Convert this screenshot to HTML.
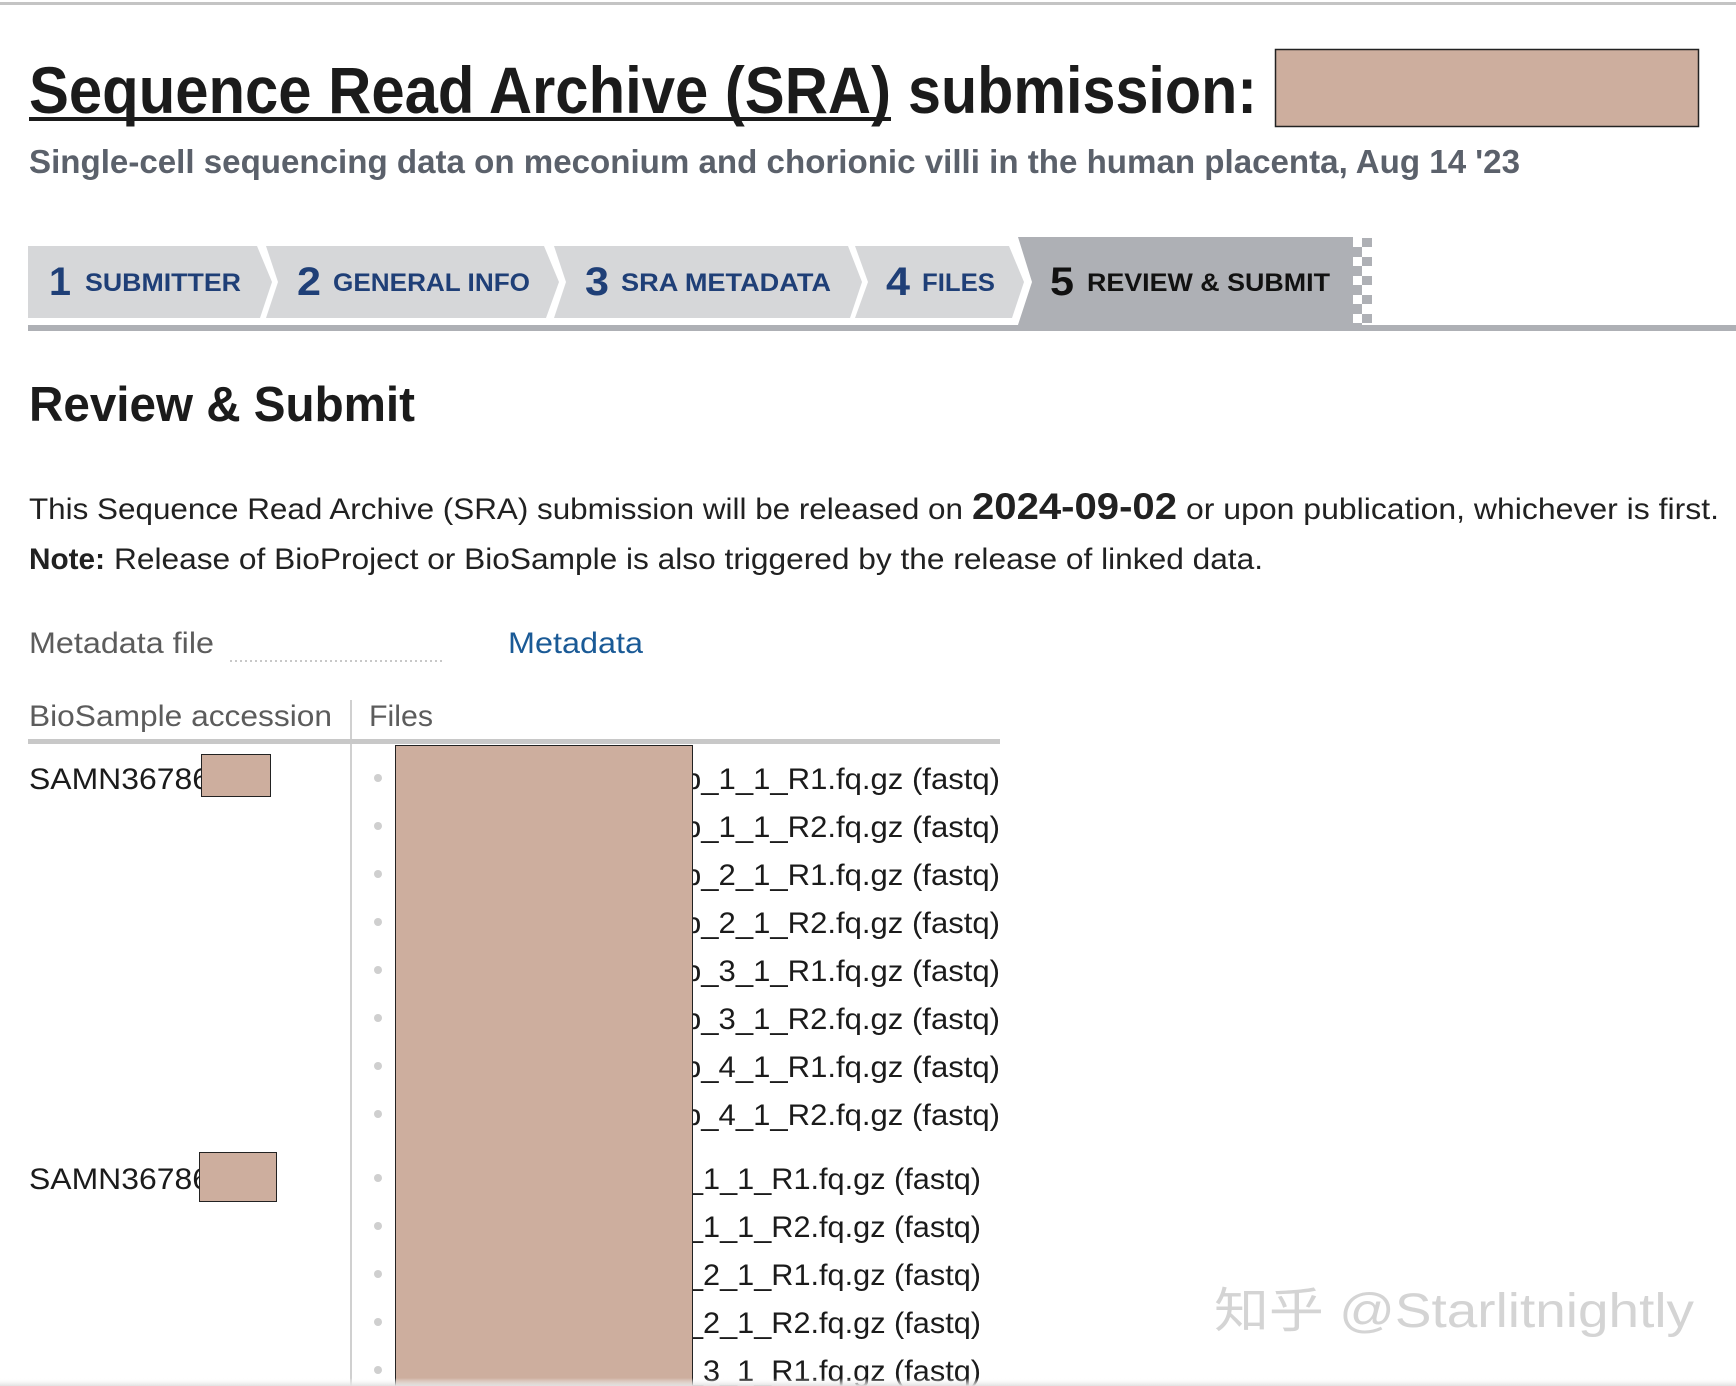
<!DOCTYPE html>
<html><head><meta charset="utf-8"><style>
html,body{margin:0;padding:0;background:#fff;}
svg{display:block;}
text{font-family:"Liberation Sans","Noto Sans CJK SC",sans-serif;}
</style></head><body>
<svg width="1736" height="1386" viewBox="0 0 1736 1386" xmlns="http://www.w3.org/2000/svg">
<defs>
<linearGradient id="sh" x1="0" y1="0" x2="0" y2="1"><stop offset="0" stop-color="#fff" stop-opacity="0"/><stop offset="1" stop-color="#e0e0e0"/></linearGradient>
</defs>
<rect x="0" y="0" width="1736" height="1386" fill="#fff"/>
<rect x="0" y="2" width="1736" height="3" fill="#c4c4c4"/>

<text x="29" y="113" font-size="66" font-weight="bold" fill="#1b1b1b" textLength="862" lengthAdjust="spacingAndGlyphs">Sequence Read Archive (SRA)</text>
<rect x="29" y="117" width="862" height="4" fill="#1b1b1b"/>
<text x="908" y="113" font-size="66" font-weight="bold" fill="#1b1b1b" textLength="349" lengthAdjust="spacingAndGlyphs">submission:</text>
<rect x="1275.5" y="49.5" width="423" height="77" fill="#cdae9e" stroke="#222" stroke-width="1.5"/>
<text x="29" y="173" font-size="33" font-weight="bold" fill="#5b616b" textLength="1491" lengthAdjust="spacingAndGlyphs">Single-cell sequencing data on meconium and chorionic villi in the human placenta, Aug 14 '23</text>

<polygon points="28,246 257,246 272,282 260,318 28,318" fill="#d6d7d9"/>
<polygon points="266,246 544,246 559,282 546,318 266,318 278,282" fill="#d6d7d9"/>
<polygon points="554,246 848,246 862,282 850,318 554,318 566,282" fill="#d6d7d9"/>
<polygon points="855,246 1009,246 1024,282 1012,318 855,318 868,282" fill="#d6d7d9"/>
<polygon points="1018,237 1353,237 1353,331 1016,331 1032,282" fill="#aeb0b5"/>
<g fill="#aeb0b5">
<rect x="1362" y="238" width="10" height="9"/><rect x="1353" y="247" width="9" height="10"/>
<rect x="1362" y="257" width="10" height="9"/><rect x="1353" y="266" width="9" height="10"/>
<rect x="1362" y="276" width="10" height="9"/><rect x="1353" y="285" width="9" height="10"/>
<rect x="1362" y="295" width="10" height="9"/><rect x="1353" y="304" width="9" height="10"/>
<rect x="1362" y="314" width="10" height="9"/><rect x="1353" y="323" width="9" height="8"/>
</g>
<rect x="28" y="325" width="1708" height="6" fill="#aeb0b5"/>
<g font-weight="bold" fill="#1f3f77">
<text x="49" y="295" font-size="40" textLength="22" lengthAdjust="spacingAndGlyphs">1</text>
<text x="85" y="291" font-size="25" textLength="156" lengthAdjust="spacingAndGlyphs">SUBMITTER</text>
<text x="297" y="295" font-size="40" textLength="24" lengthAdjust="spacingAndGlyphs">2</text>
<text x="333" y="291" font-size="25" textLength="197" lengthAdjust="spacingAndGlyphs">GENERAL INFO</text>
<text x="585" y="295" font-size="40" textLength="24" lengthAdjust="spacingAndGlyphs">3</text>
<text x="621" y="291" font-size="25" textLength="210" lengthAdjust="spacingAndGlyphs">SRA METADATA</text>
<text x="886" y="295" font-size="40" textLength="24" lengthAdjust="spacingAndGlyphs">4</text>
<text x="922" y="291" font-size="25" textLength="73" lengthAdjust="spacingAndGlyphs">FILES</text>
</g>
<g font-weight="bold" fill="#111">
<text x="1050" y="295" font-size="40" textLength="24" lengthAdjust="spacingAndGlyphs">5</text>
<text x="1087" y="291" font-size="25" textLength="243" lengthAdjust="spacingAndGlyphs">REVIEW &amp; SUBMIT</text>
</g>

<text x="29" y="421" font-size="49" font-weight="bold" fill="#1b1b1b" textLength="386" lengthAdjust="spacingAndGlyphs">Review &amp; Submit</text>
<text x="29" y="519" font-size="30" fill="#212121" textLength="934" lengthAdjust="spacingAndGlyphs">This Sequence Read Archive (SRA) submission will be released on</text>
<text x="972" y="519" font-size="37" font-weight="bold" fill="#212121" textLength="205" lengthAdjust="spacingAndGlyphs">2024-09-02</text>
<text x="1186" y="519" font-size="30" fill="#212121" textLength="533" lengthAdjust="spacingAndGlyphs">or upon publication, whichever is first.</text>
<text x="29" y="569" font-size="30" font-weight="bold" fill="#212121" textLength="76" lengthAdjust="spacingAndGlyphs">Note:</text>
<text x="114" y="569" font-size="30" fill="#212121" textLength="1149" lengthAdjust="spacingAndGlyphs">Release of BioProject or BioSample is also triggered by the release of linked data.</text>

<text x="29" y="653" font-size="30" fill="#5c5c5c" textLength="185" lengthAdjust="spacingAndGlyphs">Metadata file</text>
<line x1="230" y1="661" x2="443" y2="661" stroke="#c8c8c8" stroke-width="2" stroke-dasharray="2,3"/>
<text x="508" y="653" font-size="30" fill="#1a5a96" textLength="135" lengthAdjust="spacingAndGlyphs">Metadata</text>

<text x="29" y="726" font-size="30" fill="#5c5c5c" textLength="303" lengthAdjust="spacingAndGlyphs">BioSample accession</text>
<text x="369" y="726" font-size="30" fill="#5c5c5c" textLength="64" lengthAdjust="spacingAndGlyphs">Files</text>
<rect x="350" y="700" width="2" height="686" fill="#d0d0d0"/>
<rect x="28" y="739" width="972" height="5" fill="#c8c8c8"/>

<g font-size="30" fill="#1b1b1b">
<text x="29" y="789" textLength="181" lengthAdjust="spacingAndGlyphs">SAMN36786</text>
<text x="29" y="1189" textLength="181" lengthAdjust="spacingAndGlyphs">SAMN36786</text>
<text x="684" y="789" textLength="316" lengthAdjust="spacingAndGlyphs">p_1_1_R1.fq.gz (fastq)</text>
<text x="684" y="837" textLength="316" lengthAdjust="spacingAndGlyphs">p_1_1_R2.fq.gz (fastq)</text>
<text x="684" y="885" textLength="316" lengthAdjust="spacingAndGlyphs">p_2_1_R1.fq.gz (fastq)</text>
<text x="684" y="933" textLength="316" lengthAdjust="spacingAndGlyphs">p_2_1_R2.fq.gz (fastq)</text>
<text x="684" y="981" textLength="316" lengthAdjust="spacingAndGlyphs">p_3_1_R1.fq.gz (fastq)</text>
<text x="684" y="1029" textLength="316" lengthAdjust="spacingAndGlyphs">p_3_1_R2.fq.gz (fastq)</text>
<text x="684" y="1077" textLength="316" lengthAdjust="spacingAndGlyphs">p_4_1_R1.fq.gz (fastq)</text>
<text x="684" y="1125" textLength="316" lengthAdjust="spacingAndGlyphs">p_4_1_R2.fq.gz (fastq)</text>
<text x="686" y="1189" textLength="295" lengthAdjust="spacingAndGlyphs">_1_1_R1.fq.gz (fastq)</text>
<text x="686" y="1237" textLength="295" lengthAdjust="spacingAndGlyphs">_1_1_R2.fq.gz (fastq)</text>
<text x="686" y="1285" textLength="295" lengthAdjust="spacingAndGlyphs">_2_1_R1.fq.gz (fastq)</text>
<text x="686" y="1333" textLength="295" lengthAdjust="spacingAndGlyphs">_2_1_R2.fq.gz (fastq)</text>
<text x="686" y="1381" textLength="295" lengthAdjust="spacingAndGlyphs">_3_1_R1.fq.gz (fastq)</text>
</g>
<g fill="#cfcfcf">
<circle cx="378" cy="778" r="4"/><circle cx="378" cy="826" r="4"/><circle cx="378" cy="874" r="4"/><circle cx="378" cy="922" r="4"/>
<circle cx="378" cy="970" r="4"/><circle cx="378" cy="1018" r="4"/><circle cx="378" cy="1066" r="4"/><circle cx="378" cy="1114" r="4"/>
<circle cx="378" cy="1178" r="4"/><circle cx="378" cy="1226" r="4"/><circle cx="378" cy="1274" r="4"/><circle cx="378" cy="1322" r="4"/><circle cx="378" cy="1370" r="4"/>
</g>
<rect x="201.5" y="754.5" width="69" height="42" fill="#cdae9e" stroke="#222" stroke-width="1"/>
<rect x="199.5" y="1152.5" width="77" height="49" fill="#cdae9e" stroke="#222" stroke-width="1"/>
<rect x="395.5" y="745.5" width="297" height="645" fill="#cdae9e" stroke="#222" stroke-width="1"/>

<text x="1214" y="1327" font-size="48" fill="#d4d4d4" textLength="480" lengthAdjust="spacingAndGlyphs">知乎 @Starlitnightly</text>

<rect x="0" y="1378" width="1736" height="8" fill="url(#sh)"/>
</svg>
</body></html>
